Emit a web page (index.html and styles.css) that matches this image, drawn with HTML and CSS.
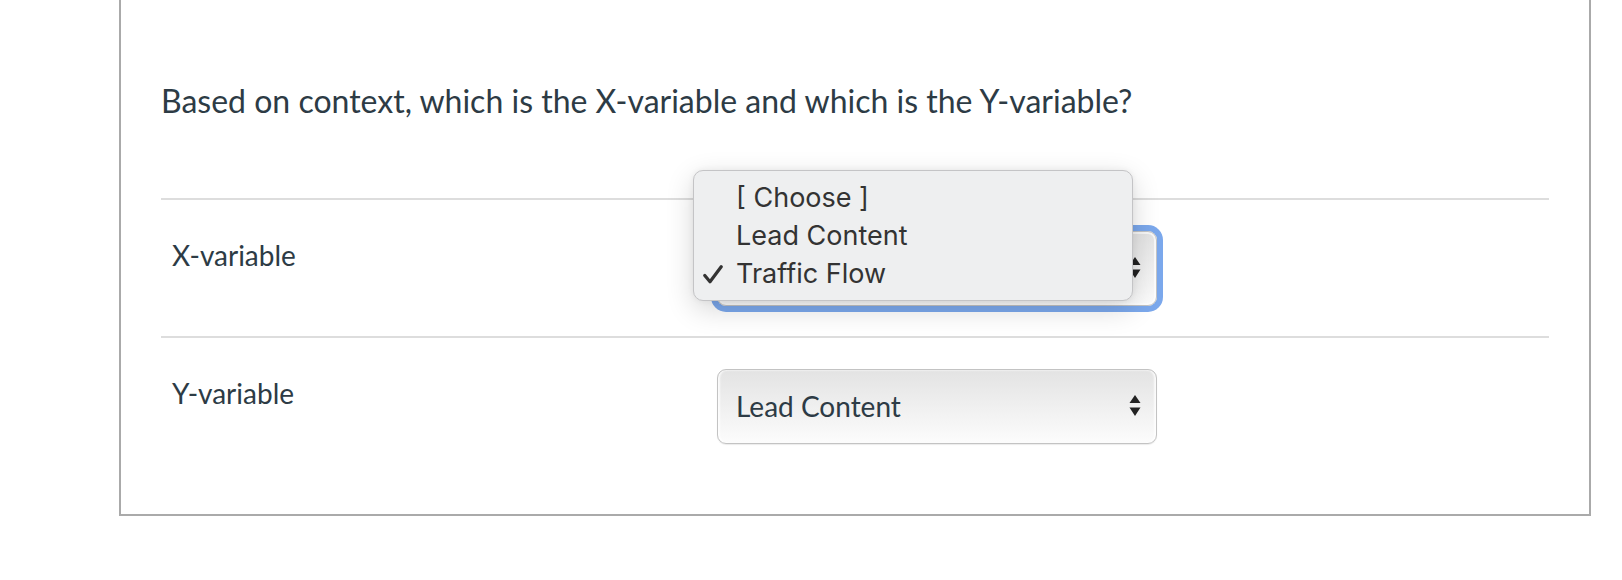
FILE: index.html
```html
<!DOCTYPE html>
<html lang="en">
<head>
<meta charset="utf-8">
<title>Matching question</title>
<link rel="stylesheet" href="styles.css">
</head>
<body>
<div class="question">
  <p class="question-text">Based on context, which is the X-variable and which is the Y-variable?</p>
  <div class="answers">
    <div class="answer-row">
      <div class="answer-label">X-variable</div>
      <div class="answer-select">
        <div class="select-wrap">
          <div class="select focused">
            <span class="select-value">Traffic Flow</span>
            <svg class="arrows" width="12" height="22" viewBox="0 0 12 22"><path d="M6 0 L11.5 8 L0.5 8 Z M0.5 12.5 L11.5 12.5 L6 21 Z" fill="#222"/></svg>
          </div>
          <div class="menu">
            <div class="menu-item">[ Choose ]</div>
            <div class="menu-item">Lead Content</div>
            <div class="menu-item checked">
              <svg class="check" width="20" height="19" viewBox="0 0 20 19"><path d="M1.8 10.5 L7 16.8 L18.2 1.8" fill="none" stroke="#333" stroke-width="3.2" stroke-linecap="round" stroke-linejoin="round"/></svg>
              Traffic Flow
            </div>
          </div>
        </div>
      </div>
    </div>
    <div class="answer-row">
      <div class="answer-label">Y-variable</div>
      <div class="answer-select">
        <div class="select-wrap">
          <div class="select">
            <span class="select-value">Lead Content</span>
            <svg class="arrows" width="12" height="22" viewBox="0 0 12 22"><path d="M6 0 L11.5 8 L0.5 8 Z M0.5 12.5 L11.5 12.5 L6 21 Z" fill="#222"/></svg>
          </div>
        </div>
      </div>
    </div>
  </div>
</div>
</body>
</html>
```
FILE: styles.css
```css
html, body {
  margin: 0;
  padding: 0;
  background: #ffffff;
}

.question {
  box-sizing: border-box;
  width: 1472px;
  margin-left: 119px;
  border: 2px solid #aaaaaa;
  border-top: none;
  padding: 80px 40px 40px 40px;
  font-family: Lato, "Open Sans", sans-serif;
  color: #2d3b45;
}

.question-text {
  margin: 0 0 76px 0;
  font-size: 32px;
  line-height: 42px;
}

.answer-row {
  display: grid;
  grid-template-columns: 556px 1fr;
  height: 136px;
  border-top: 2px solid #dddddd;
}

.answer-label {
  padding: 34px 0 0 11px;
  font-size: 28px;
  line-height: 42px;
}

.answer-select {
  display: flex;
  align-items: center;
}

.select-wrap {
  position: relative;
}

.select {
  box-sizing: border-box;
  width: 440px;
  height: 75px;
  display: flex;
  align-items: center;
  justify-content: space-between;
  padding: 0 15px 0 18px;
  border: 1px solid #c3c3c3;
  border-radius: 9px;
  background: linear-gradient(#e3e3e3, #fcfcfc);
  box-shadow: inset 2px 0 2px rgba(255,255,255,0.8), inset -2px 0 2px rgba(255,255,255,0.8), 0 1px 1px rgba(0,0,0,0.08);
  font-size: 28px;
  line-height: 42px;
  color: #2d3b45;
}

.select.focused {
  box-shadow: 0 0 0 6px #7ba8ec, inset 0 0 0 2px rgba(255,255,255,0.7);
}

.arrows {
  display: block;
}

.menu {
  position: absolute;
  left: -24px;
  top: -61px;
  z-index: 2;
  box-sizing: border-box;
  width: 440px;
  height: 131px;
  padding: 8px 0;
  background: #eeeff0;
  border: 1px solid #c4c4c6;
  border-radius: 10px;
  box-shadow: 0 8px 28px rgba(0,0,0,0.16), 0 0 6px rgba(0,0,0,0.06);
  font-family: Inter, "Liberation Sans", sans-serif;
  font-size: 27px;
  color: #333333;
}

.menu-item {
  position: relative;
  height: 38px;
  line-height: 38px;
  padding-left: 42px;
}

.check {
  position: absolute;
  left: 9px;
  top: 10px;
}
```
